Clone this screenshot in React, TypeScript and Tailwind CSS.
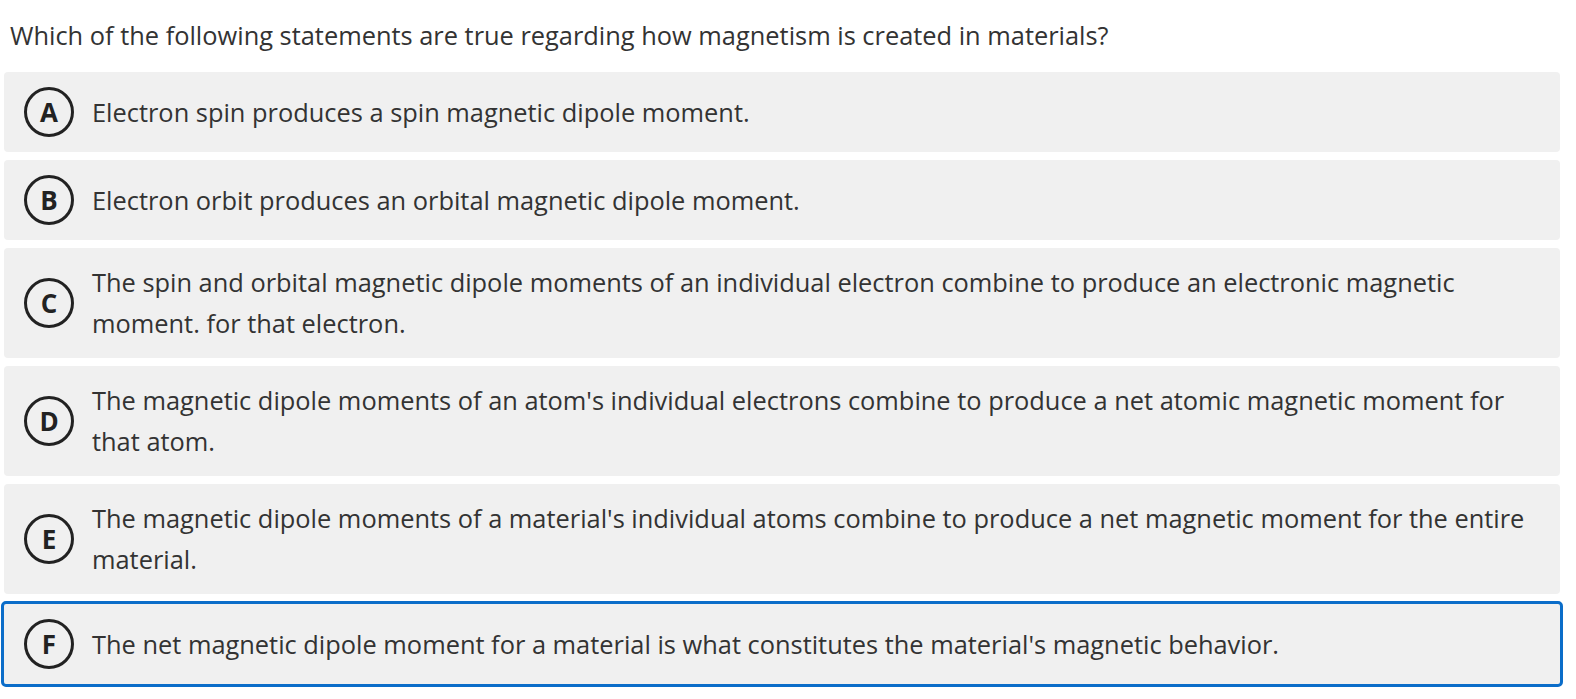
import React from "react";

const options = [
  { key: "A", text: "Electron spin produces a spin magnetic dipole moment." },
  { key: "B", text: "Electron orbit produces an orbital magnetic dipole moment." },
  {
    key: "C",
    text: "The spin and orbital magnetic dipole moments of an individual electron combine to produce an electronic magnetic moment. for that electron.",
  },
  {
    key: "D",
    text: "The magnetic dipole moments of an atom's individual electrons combine to produce a net atomic magnetic moment for that atom.",
  },
  {
    key: "E",
    text: "The magnetic dipole moments of a material's individual atoms combine to produce a net magnetic moment for the entire material.",
  },
  {
    key: "F",
    text: "The net magnetic dipole moment for a material is what constitutes the material's magnetic behavior.",
  },
];

export default function App() {
  const selected = "F";

  return (
    <div className="min-h-[699px] bg-white text-[#333333] font-['Open_Sans',sans-serif]">
      <div className="pl-[10px] pt-[17px] pb-[19px] text-[25.4px] leading-[36px]">
        Which of the following statements are true regarding how magnetism is created in materials?
      </div>

      <div className="flex flex-col gap-[8px] pl-[4px] pr-[16px]">
        {options.map((o) => {
          const isSel = o.key === selected;
          return (
            <div
              key={o.key}
              className={
                isSel
                  ? "flex items-center gap-[18px] rounded-[5px] bg-[#f0f0f0] border-[3px] border-[#0b6dc9] -mx-[3px] -mt-[1px] pl-[20px] pr-[20px] py-[14px]"
                  : "flex items-center gap-[18px] rounded-[4px] bg-[#f0f0f0] pl-[20px] pr-[20px] py-[14px]"
              }
            >
              <div className="w-[50px] h-[50px] my-[1px] shrink-0 rounded-full border-[3px] border-[#222222] flex items-center justify-center text-[26px] font-bold text-[#222222]">
                {o.key}
              </div>
              <div className="text-[25.4px] leading-[41px] text-[#333333]">{o.text}</div>
            </div>
          );
        })}
      </div>
    </div>
  );
}
